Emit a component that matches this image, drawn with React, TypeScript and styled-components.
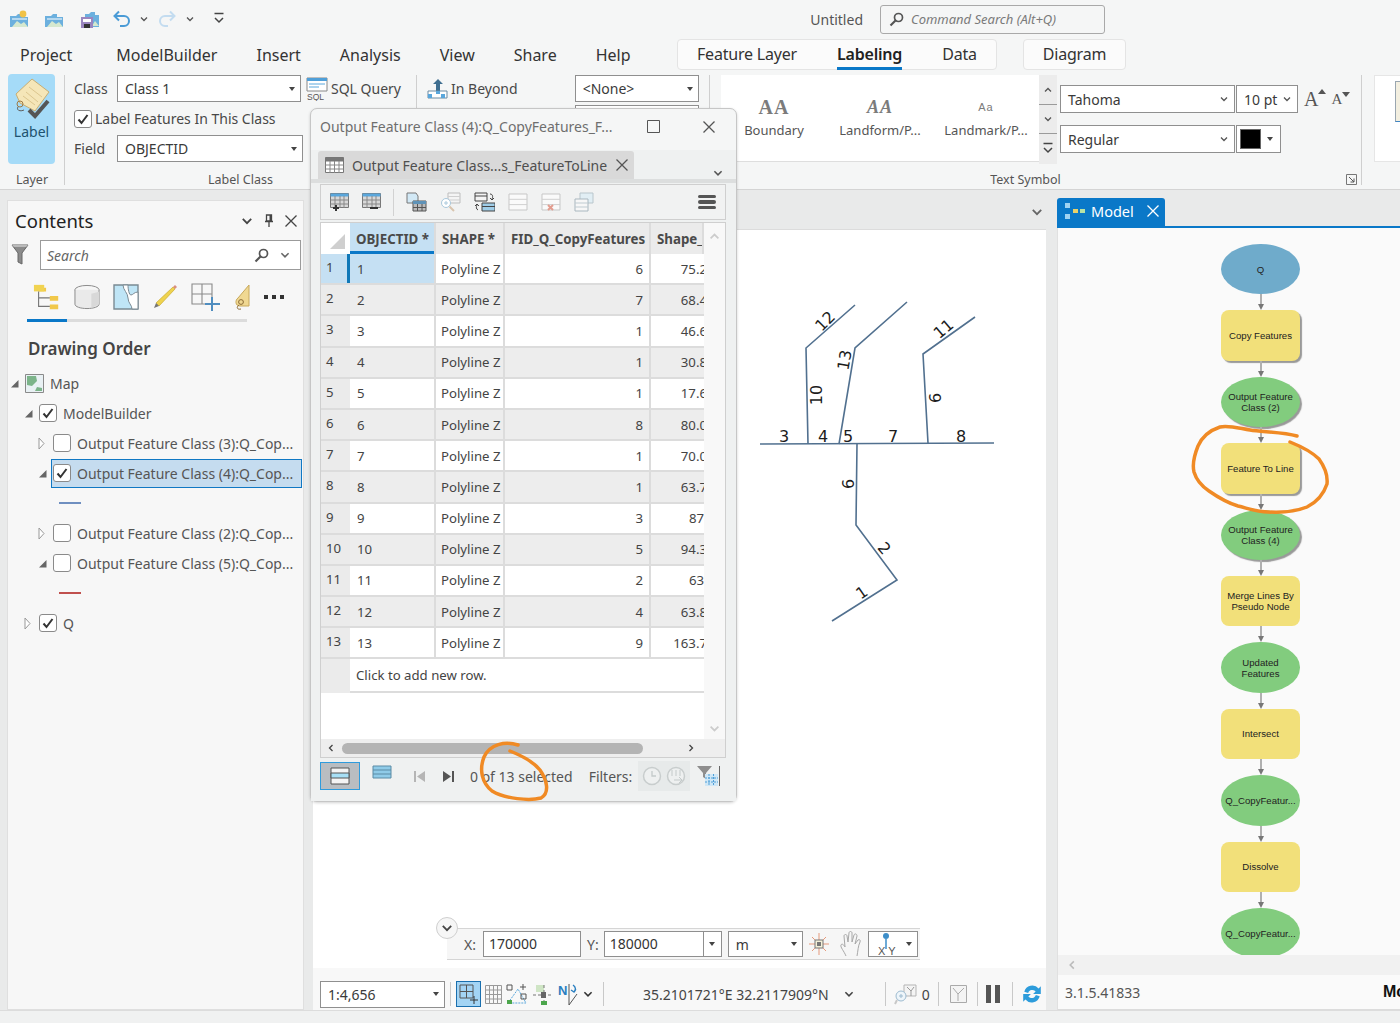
import React from "react";
import styled, { createGlobalStyle, css } from "styled-components";

const GlobalStyle = createGlobalStyle`
  html, body { margin: 0; padding: 0; background: #f5f6f6; }
  body { font-family: "Noto Sans", "Open Sans", sans-serif; color: #3c3c3c; }
  * { box-sizing: border-box; }
  svg { flex: none; }
`;

const Page = styled.div`
  position: relative;
  width: 1400px;
  height: 1023px;
  overflow: hidden;
  display: flex;
  flex-direction: column;
  background: #f5f6f6;
`;

/* title bar */
const TitleBar = styled.div`
  height: 38px;
  flex: none;
  display: flex;
  align-items: center;
  justify-content: space-between;
  padding: 0 295px 0 9px;
`;
const QuickAccess = styled.div`
  display: flex;
  align-items: center;
`;
const QuickSlot = styled.span<{ $w: number }>`
  width: ${(p) => p.$w}px;
  display: flex;
  align-items: center;
`;
const TitleRight = styled.div`
  display: flex;
  align-items: center;
  gap: 17px;
`;
const ProjectName = styled.span`
  font-size: 14px;
  color: #555;
`;
const CommandSearch = styled.div`
  width: 225px;
  height: 29px;
  border: 1px solid #a9a9a9;
  border-radius: 3px;
  display: flex;
  align-items: center;
  gap: 7px;
  padding-left: 8px;
  font-size: 13px;
  font-style: italic;
  color: #7a7a7a;
`;

/* tabs */
const TabRow = styled.div`
  height: 34px;
  flex: none;
  display: flex;
  align-items: stretch;
`;
const MainTabs = styled.div`
  width: 677px;
  display: flex;
  align-items: center;
  gap: 39px;
  padding-left: 20px;
`;
const TabLabel = styled.span<{ $active?: boolean; $wide?: boolean }>`
  font-size: 16px;
  line-height: 31px;
  color: #333;
  white-space: nowrap;
  margin-right: ${(p) => (p.$wide ? 5 : 0)}px;
  ${(p) =>
    p.$active &&
    css`
      font-weight: 600;
      color: #222;
      box-shadow: inset 0 -3px 0 #0a78c8;
    `}
`;
const ContextGroup = styled.div<{ $first?: boolean }>`
  display: flex;
  align-items: center;
  gap: 40px;
  height: 31px;
  margin: 1px 0 0 ${(p) => (p.$first ? 0 : 26)}px;
  padding: 0 19px;
  background: #fbfbfb;
  border: 1px solid #e4e4e4;
  border-radius: 4px;
  letter-spacing: -0.2px;
  & > span {
    letter-spacing: -0.2px;
  }
`;

/* ribbon */
const Ribbon = styled.div`
  height: 118px;
  flex: none;
  display: flex;
  align-items: flex-start;
  border-bottom: 1px solid #d4d4d4;
`;
const RibbonGroup = styled.div<{ $w: number; $last?: boolean }>`
  width: ${(p) => p.$w}px;
  height: 110px;
  margin-top: 3px;
  flex: none;
  display: flex;
  flex-direction: column;
  border-right: ${(p) => (p.$last ? "none" : "1px solid #cfcfcf")};
`;
const GroupBody = styled.div<{ $pl: number }>`
  height: 90px;
  flex: none;
  display: flex;
  padding-left: ${(p) => p.$pl}px;
`;
const GroupCaption = styled.div`
  flex: 1;
  display: flex;
  align-items: center;
  justify-content: center;
  padding-top: 6px;
  font-size: 12.5px;
  color: #555;
`;
const CaptionRow = styled.div`
  flex: 1;
  display: flex;
  align-items: center;
`;
const Launcher = styled.span`
  width: 20px;
  display: flex;
  justify-content: center;
  padding-top: 6px;
`;
const LabelButton = styled.div`
  width: 47px;
  height: 90px;
  margin-top: -1px;
  background: #a5dbf8;
  border-radius: 4px;
  display: flex;
  flex-direction: column;
  align-items: center;
  padding-top: 3px;
  font-size: 14px;
  line-height: 17px;
  color: #21526f;
`;
const FieldStack = styled.div`
  display: grid;
  grid-auto-rows: 27px;
  row-gap: 3px;
`;
const FieldRow = styled.div`
  display: flex;
  align-items: center;
  font-size: 14px;
  color: #484848;
  white-space: nowrap;
`;
const FieldName = styled.span`
  width: 43px;
`;
const IconText = styled.span<{ $ml: number }>`
  display: flex;
  align-items: center;
  gap: 3px;
  margin-left: ${(p) => p.$ml}px;
`;
const Select = styled.div<{ $w: number; $h?: number; $ml?: number }>`
  width: ${(p) => p.$w}px;
  height: ${(p) => p.$h ?? 27}px;
  margin-left: ${(p) => p.$ml ?? 0}px;
  flex: none;
  background: #fff;
  border: 1px solid #8f8f8f;
  display: flex;
  align-items: center;
  justify-content: space-between;
  padding: 0 5px 0 7px;
  font-size: 14px;
  color: #3a3a3a;
`;
const Caret = styled.span`
  width: 0;
  height: 0;
  border-left: 3px solid transparent;
  border-right: 3px solid transparent;
  border-top: 4px solid #444;
`;
const Gallery = styled.div`
  margin-left: 11px;
  width: 318px;
  height: 87px;
  background: #fff;
  border-bottom: 1px solid #dedede;
  display: flex;
`;
const GalleryItem = styled.div`
  flex: 1;
  display: flex;
  flex-direction: column;
  align-items: center;
  font-size: 13px;
  line-height: 20px;
  color: #555;
  padding-top: 18px;
`;
const SymbolSample = styled.span<{ $size: number; $italic?: boolean; $serif?: boolean }>`
  height: 27px;
  display: flex;
  align-items: center;
  font-size: ${(p) => p.$size}px;
  font-weight: ${(p) => (p.$size > 14 ? 700 : 400)};
  font-style: ${(p) => (p.$italic ? "italic" : "normal")};
  font-family: ${(p) => (p.$serif ? '"Liberation Serif", serif' : '"Liberation Sans", sans-serif')};
  letter-spacing: 1px;
  color: #7b7b7b;
`;
const GalleryScroll = styled.div`
  width: 18px;
  height: 87px;
  display: grid;
  grid-template-rows: 29px 28px 30px;
  row-gap: 1px;
  background: #9b9b9b;
`;
const ScrollButton = styled.span`
  background: #ececec;
  display: flex;
  align-items: center;
  justify-content: center;
`;
const FontControls = styled.div`
  margin-left: 3px;
  padding-top: 10px;
  display: grid;
  grid-auto-rows: 28px;
  row-gap: 12px;
`;
const FontRow = styled.div`
  display: flex;
  align-items: center;
`;
const GrowButton = styled.span<{ $ml: number; $size: number }>`
  margin-left: ${(p) => p.$ml}px;
  font-family: "Liberation Serif", serif;
  font-size: ${(p) => p.$size}px;
  color: #555;
  display: flex;
  align-items: flex-start;
  line-height: 1;
`;
const TinyTriangle = styled.span<{ $down?: boolean }>`
  width: 0;
  height: 0;
  border-left: 4px solid transparent;
  border-right: 4px solid transparent;
  ${(p) => (p.$down ? "border-top: 5px solid #555;" : "border-bottom: 5px solid #555;")}
`;
const Swatch = styled.div`
  width: 45px;
  height: 28px;
  margin-left: 1px;
  background: #fff;
  border: 1px solid #8f8f8f;
  display: flex;
  align-items: center;
  gap: 6px;
  padding-left: 3px;
`;
const SwatchColor = styled.span`
  width: 21px;
  height: 20px;
  background: #000;
  border: 1px solid #666;
`;
const LayoutPreview = styled.div`
  margin: 3px 0 0 12px;
  width: 40px;
  height: 87px;
  background: #fff;
  border: 1px solid #e6e6e6;
  padding: 5px 0 0 20px;
`;
const PreviewThumb = styled.div`
  width: 20px;
  height: 41px;
  background: #f3efe0;
  border: 1px solid #9aa6b0;
  border-bottom: 1px solid #3f86c6;
`;

/* main area */
const Main = styled.div`
  height: 820px;
  flex: none;
  display: flex;
  background: #e9eaea;
`;
const BottomStrip = styled.div`
  flex: 1;
  background: #f0f1f1;
  border-top: 1px solid #dcdcdc;
`;

/* contents pane */
const Contents = styled.aside`
  width: 297px;
  height: 810px;
  margin: 10px 0 0 7px;
  background: #f7f7f7;
  border: 1px solid #dfdfdf;
  flex: none;
`;
const PaneHead = styled.div`
  height: 39px;
  display: flex;
  align-items: center;
  padding: 0 5px 0 7px;
`;
const PaneTitle = styled.h2`
  margin: 0;
  flex: 1;
  font-size: 18.5px;
  font-weight: 400;
  color: #222;
`;
const PaneActions = styled.div`
  display: flex;
  align-items: center;
  gap: 10px;
`;
const SearchRow = styled.div`
  display: flex;
  align-items: center;
  gap: 11px;
  padding-left: 3px;
`;
const SearchBox = styled.div`
  width: 261px;
  height: 30px;
  background: #fff;
  border: 1px solid #9b9b9b;
  display: flex;
  align-items: center;
  gap: 10px;
  padding: 0 9px 0 6px;
  font-size: 14px;
  font-style: italic;
  color: #666;
`;
const SearchText = styled.span`
  flex: 1;
`;
const PaneTabs = styled.div`
  display: flex;
  align-items: center;
  gap: 13px;
  margin: 12px 0 0 25px;
  height: 30px;
`;
const PaneTabTrack = styled.div`
  width: 220px;
  height: 3px;
  margin: 7px 0 0 19px;
  background: #dcdcdc;
`;
const PaneTabThumb = styled.div`
  width: 40px;
  height: 3px;
  background: #0a78c8;
`;
const DrawingOrder = styled.h3`
  margin: 15px 0 0 20px;
  font-size: 17px;
  line-height: 24px;
  font-weight: 600;
  color: #444;
`;
const Tree = styled.div`
  margin-top: 7px;
`;
const TreeRow = styled.div<{ $indent: number }>`
  height: 30px;
  display: flex;
  align-items: center;
  padding-left: ${(p) => p.$indent}px;
  font-size: 14px;
  color: #555;
  white-space: nowrap;
`;
const TreeToggle = styled.span`
  width: 15px;
  flex: none;
  display: flex;
`;
const TreeItem = styled.div<{ $selected?: boolean }>`
  height: 30px;
  flex: 1;
  display: flex;
  align-items: center;
  gap: 6px;
  ${(p) =>
    p.$selected &&
    css`
      height: 29px;
      margin: 0 1px 0 -2px;
      padding-left: 1px;
      background: #c5dcef;
      border: 1px solid #1078c4;
    `}
`;
const Check = styled.span`
  width: 18px;
  height: 18px;
  flex: none;
  background: #fff;
  border: 1px solid #8a8a8a;
  border-radius: 3px;
  display: flex;
  align-items: center;
  justify-content: center;
`;
const LegendLine = styled.span<{ $color: string }>`
  width: 22px;
  height: 2px;
  margin-left: 51px;
  background: ${(p) => p.$color};
`;

/* center pane */
const Center = styled.section`
  width: 733px;
  margin-left: 9px;
  flex: none;
  display: flex;
  flex-direction: column;
`;
const CenterHead = styled.div`
  height: 39px;
  display: flex;
  align-items: center;
  justify-content: flex-end;
  padding: 4px 2px 0 0;
`;
const MapArea = styled.div`
  position: relative;
  height: 739px;
  background: #fff;
  border-top: 1px solid #dcdcdc;
`;
const MapSvg = styled.svg`
  display: block;
  width: 733px;
  height: 738px;
`;
const CoordBar = styled.div`
  position: absolute;
  left: 134px;
  top: 698px;
  width: 473px;
  height: 32px;
  background: #f6f6f6;
  border-top: 1px solid #d5d5d5;
  border-bottom: 1px solid #d5d5d5;
  display: flex;
  align-items: center;
  padding-left: 17px;
  font-size: 14px;
  color: #555;
`;
const CoordToggle = styled.span`
  position: absolute;
  left: -11px;
  top: -12px;
  width: 22px;
  height: 22px;
  border-radius: 50%;
  background: #f6f6f6;
  border: 1px solid #cfcfcf;
  display: flex;
  align-items: center;
  justify-content: center;
`;
const CoordInput = styled.span<{ $w: number; $ml: number }>`
  width: ${(p) => p.$w}px;
  height: 26px;
  margin-left: ${(p) => p.$ml}px;
  background: #fff;
  border: 1px solid #8f8f8f;
  padding-left: 5px;
  line-height: 24px;
  color: #333;
`;
const CoordDrop = styled.span`
  width: 19px;
  height: 26px;
  margin-left: -1px;
  background: #fff;
  border: 1px solid #8f8f8f;
  display: flex;
  align-items: center;
  justify-content: center;
`;
const CoordIcon = styled.span<{ $ml: number }>`
  margin-left: ${(p) => p.$ml}px;
  display: flex;
`;
const StatusBar = styled.div`
  height: 42px;
  flex: none;
  background: #f8f8f8;
  display: flex;
  align-items: center;
  padding: 10px 0 0 7px;
  font-size: 14px;
  color: #444;
`;
const StatusSep = styled.span<{ $ml: number }>`
  width: 1px;
  height: 24px;
  margin-left: ${(p) => p.$ml}px;
  background: #c9c9c9;
  flex: none;
`;
const StatusIcons = styled.span<{ $ml: number; $gap: number }>`
  margin-left: ${(p) => p.$ml}px;
  display: flex;
  align-items: center;
  gap: ${(p) => p.$gap}px;
`;
const ActiveToggle = styled.span`
  width: 25px;
  height: 26px;
  background: #a3d4f4;
  border: 1px solid #1a6fae;
  display: flex;
  align-items: center;
  justify-content: center;
`;
const Coordinates = styled.span<{ $ml: number }>`
  margin-left: ${(p) => p.$ml}px;
  white-space: nowrap;
`;

/* model pane */
const ModelPane = styled.section`
  width: 343px;
  margin-left: 11px;
  flex: none;
  display: flex;
  flex-direction: column;
`;
const ModelTabStrip = styled.div`
  height: 38px;
  flex: none;
  display: flex;
  align-items: flex-end;
  border-bottom: 2px solid #0a78c8;
`;
const ModelTab = styled.div`
  width: 108px;
  height: 28px;
  background: #0a78c8;
  border-radius: 3px 3px 0 0;
  display: flex;
  align-items: center;
  gap: 5px;
  padding: 0 0 2px 7px;
  font-size: 14.5px;
  color: #fff;
`;
const ModelTabName = styled.span`
  margin-right: 7px;
`;
const ModelCanvas = styled.div`
  height: 727px;
  flex: none;
  overflow: hidden;
  background: #fafafa;
  border-left: 1px solid #e0e0e0;
  padding: 16px 0 0 163px;
`;
const Flow = styled.div`
  width: 79px;
  display: flex;
  flex-direction: column;
`;
const Connector = styled.div`
  height: 16px;
  display: flex;
  flex-direction: column;
  align-items: center;
  &::before {
    content: "";
    flex: 1;
    width: 2px;
    background: #b0b0b0;
  }
  &::after {
    content: "";
    border-left: 3px solid transparent;
    border-right: 3px solid transparent;
    border-top: 6px solid #777;
  }
`;
const nodeFill = { data: "#6fabcb", tool: "#f2e07a", output: "#82cc7e" };
const Node = styled.div<{ $kind: keyof typeof nodeFill; $shadow?: boolean }>`
  width: 79px;
  height: 50.4px;
  flex: none;
  display: flex;
  align-items: center;
  justify-content: center;
  text-align: center;
  background: ${(p) => nodeFill[p.$kind]};
  border-radius: ${(p) => (p.$kind === "tool" ? "8px" : "50%")};
  box-shadow: ${(p) => (p.$shadow ? "2px 2px 1px #999" : "none")};
  font-family: "Liberation Sans", Arial, sans-serif;
  font-size: 9.6px;
  line-height: 11px;
  color: #222;
  white-space: pre-line;
`;
const ModelScroll = styled.div`
  height: 20px;
  flex: none;
  background: #f1f1f1;
  border-left: 1px solid #e0e0e0;
  display: flex;
  align-items: center;
  padding-left: 8px;
`;
const ModelFooter = styled.div`
  height: 35px;
  flex: none;
  background: #fafafa;
  border-left: 1px solid #e0e0e0;
  border-bottom: 1px solid #dcdcdc;
  display: grid;
  grid-template-columns: 318px 1fr;
  align-items: center;
  padding-left: 7px;
  overflow: hidden;
  font-size: 14px;
  color: #555;
`;
const ModelName = styled.span`
  font-family: "Liberation Sans", Arial, sans-serif;
  font-size: 16px;
  font-weight: 700;
  color: #111;
  white-space: nowrap;
`;

/* floating attribute table */
const TableWindow = styled.div`
  position: absolute;
  left: 310px;
  top: 108px;
  width: 427px;
  height: 694px;
  background: #f5f6f6;
  border: 1px solid #c6c6c6;
  border-radius: 7px;
  box-shadow: 0 1px 3px rgba(0, 0, 0, 0.18);
  display: flex;
  flex-direction: column;
`;
const WindowTitle = styled.div`
  height: 41px;
  flex: none;
  display: flex;
  align-items: center;
  padding: 0 20px 6px 9px;
  font-size: 14px;
  color: #6e6e6e;
  white-space: nowrap;
`;
const WindowTitleText = styled.span`
  width: 336px;
`;
const WindowActions = styled.div`
  display: flex;
  align-items: center;
  gap: 42px;
`;
const WindowTabs = styled.div`
  height: 29px;
  flex: none;
  background: #eff1f1;
  display: flex;
  align-items: flex-end;
  justify-content: space-between;
  padding: 0 12px 0 7px;
`;
const WindowTab = styled.div`
  width: 316px;
  height: 28px;
  background: #d9d9d9;
  border-radius: 3px 3px 0 0;
  display: flex;
  align-items: center;
  gap: 8px;
  padding: 0 6px 0 7px;
  font-size: 14px;
  color: #4f4f4f;
  white-space: nowrap;
`;
const WindowTabText = styled.span`
  flex: 1;
`;
const WindowBody = styled.div`
  flex: 1;
  background: #eff1f1;
  border-top: 4px solid #dcdede;
  padding: 1px 10px 0 9px;
  display: flex;
  flex-direction: column;
`;
const TableToolbar = styled.div`
  height: 36px;
  flex: none;
  border: 1px solid #cfcfcf;
  background: #f1f2f2;
  display: flex;
  align-items: center;
  padding: 0 9px 0 9px;
`;
const ToolbarSep = styled.span`
  width: 1px;
  height: 27px;
  margin: 0 12px 0 12px;
  background: #d2d2d2;
`;
const ToolGroup = styled.span`
  display: flex;
  align-items: center;
  gap: 13px;
`;
const Hamburger = styled.span`
  margin-left: auto;
  width: 18px;
  display: flex;
  flex-direction: column;
  gap: 2px;
  & i {
    height: 3.5px;
    border-radius: 2px;
    background: #555;
  }
`;
const TableFrame = styled.div`
  height: 536px;
  flex: none;
  margin-top: 2px;
  background: #fff;
  border: 1px solid #cfcfcf;
  display: flex;
  flex-direction: column;
`;
const TableScrollArea = styled.div`
  height: 516px;
  flex: none;
  display: flex;
`;
const TableGrid = styled.div`
  width: 383px;
  flex: none;
`;
const gridColumns = "29px 86px 69px 146px 53px";
const HeadRow = styled.div`
  height: 31px;
  display: grid;
  grid-template-columns: ${gridColumns};
`;
const HeadCorner = styled.div`
  background: linear-gradient(135deg, #fff 62%, #cfcfcf 63%);
  border: 5px solid #fff;
`;
const HeadCell = styled.div<{ $active?: boolean }>`
  background: ${(p) => (p.$active ? "#c5e0f3" : "#ebebeb")};
  border-right: 2px solid #dcdcdc;
  box-shadow: ${(p) => (p.$active ? "inset 0 -3px 0 #0a78c8" : "none")};
  display: flex;
  align-items: center;
  padding-left: 6px;
  font-size: 13.3px;
  font-weight: 700;
  color: #4a4a4a;
  white-space: nowrap;
  overflow: hidden;
`;
const DataRow = styled.div<{ $even: boolean }>`
  height: 31.2px;
  display: grid;
  grid-template-columns: ${gridColumns};
  background: ${(p) => (p.$even ? "#ededed" : "#fff")};
  border-bottom: 2px solid #dcdcdc;
  font-size: 13.2px;
  color: #444;
`;
const RowHead = styled.div<{ $active?: boolean }>`
  background: ${(p) => (p.$active ? "#c5e0f3" : "#ebebeb")};
  padding-left: 5px;
  line-height: 27px;
  box-shadow: ${(p) => (p.$active ? "inset -3px 0 0 #0f78b8" : "none")};
`;
const Cell = styled.div<{ $right?: boolean; $active?: boolean; $pl?: number }>`
  background: ${(p) => (p.$active ? "#c5e0f3" : "transparent")};
  border-right: 2px solid #dcdcdc;
  display: flex;
  align-items: center;
  justify-content: ${(p) => (p.$right ? "flex-end" : "flex-start")};
  padding: 0 ${(p) => (p.$right ? 6 : 0)}px 0 ${(p) => p.$pl ?? (p.$right ? 0 : 5)}px;
  overflow: hidden;
  white-space: nowrap;
`;
const ClippedCell = styled.div`
  display: flex;
  align-items: center;
  justify-content: flex-end;
  overflow: hidden;
  white-space: nowrap;
`;
const ClippedValue = styled.span<{ $cut: boolean }>`
  margin-right: ${(p) => (p.$cut ? -3 : 0)}px;
`;
const AddRow = styled.div`
  height: 32px;
  display: grid;
  grid-template-columns: 29px 1fr;
  font-size: 13.2px;
  color: #444;
`;
const AddRowHead = styled.div`
  background: #ebebeb;
`;
const AddRowText = styled.div`
  border-bottom: 2px solid #dcdcdc;
  padding-left: 6px;
  line-height: 32px;
`;
const VScroll = styled.div`
  flex: 1;
  background: #f8f8f8;
  display: flex;
  flex-direction: column;
  align-items: center;
  justify-content: space-between;
  padding: 7px 0 4px;
`;
const HScroll = styled.div`
  flex: 1;
  background: #eeeeee;
  display: flex;
  align-items: center;
  padding-left: 5px;
`;
const HScrollThumb = styled.span`
  width: 301px;
  height: 11px;
  margin: 0 43px 0 6px;
  background: #b4b4b4;
  border-radius: 6px;
`;
const TableFooter = styled.div`
  height: 36px;
  flex: none;
  display: flex;
  align-items: center;
  font-size: 14px;
  color: #555;
  white-space: nowrap;
`;
const ViewToggle = styled.span`
  width: 40px;
  height: 28px;
  background: #b9bdc1;
  border: 1px solid #2f9bdc;
  display: flex;
  align-items: center;
  justify-content: center;
`;
const FooterSlot = styled.span<{ $ml: number; $raised?: boolean }>`
  margin-left: ${(p) => p.$ml}px;
  margin-bottom: ${(p) => (p.$raised ? 8 : 0)}px;
  display: flex;
  align-items: center;
`;
const FilterBox = styled.span`
  width: 52px;
  height: 30px;
  margin-left: 6px;
  background: #e7eaea;
  display: flex;
  align-items: center;
  justify-content: center;
  gap: 4px;
`;

const Annotation = styled.svg`
  position: absolute;
  left: 0;
  top: 0;
  pointer-events: none;
`;

/* small drawings */
const Svg: React.FC<{ w?: number; h?: number; vb?: string; children: React.ReactNode }> = ({
  w = 20,
  h = 20,
  vb,
  children,
}) => (
  <svg width={w} height={h} viewBox={vb ?? `0 0 ${w} ${h}`} fill="none">
    {children}
  </svg>
);

const Chevron = ({ color = "#555", size = 10, dir = "down" }: { color?: string; size?: number; dir?: "down" | "up" | "left" | "right" }) => {
  const d = {
    down: "M2 3.5l3 3 3-3",
    up: "M2 6.5l3-3 3 3",
    left: "M6.5 2l-3 3 3 3",
    right: "M3.5 2l3 3-3 3",
  }[dir];
  return (
    <Svg w={size} h={size} vb="0 0 10 10">
      <path d={d} stroke={color} strokeWidth="1.3" />
    </Svg>
  );
};
const Close = ({ color = "#555", size = 14 }: { color?: string; size?: number }) => (
  <Svg w={size} h={size} vb="0 0 14 14">
    <path d="M1.5 1.5l11 11M12.5 1.5l-11 11" stroke={color} strokeWidth="1.3" />
  </Svg>
);
const Magnifier = ({ size = 15 }: { size?: number }) => (
  <Svg w={size} h={size} vb="0 0 15 15">
    <circle cx="9.500" cy="5.500" r="4" stroke="#555" strokeWidth="1.7" />
    <path d="M6.500 8.500L1.500 13.500" stroke="#555" strokeWidth="2.200" />
  </Svg>
);
const Tick = () => (
  <Svg w={14} h={14} vb="0 0 14 14">
    <path d="M2.500 7.500l3 3.500 6-8" stroke="#333" strokeWidth="2" />
  </Svg>
);
const Folder = ({ sun }: { sun?: boolean }) => (
  <Svg>
    <path d="M1 7h6l2-2h4v3h6v10H1z" fill="#6cb0de" />
    <path d="M3 18l5-6 4 3 3-2 4 5z" fill="#d5e8cf" />
    <path d="M3 9h15v2H3z" fill="#fff" opacity=".5" />
    {sun && <circle cx="14" cy="5" r="3.400" fill="#f0c247" />}
  </Svg>
);
const SaveIcon = () => (
  <Svg>
    <path d="M5 5h4l2-2h4v3h4v12H5z" fill="#6cb0de" />
    <path d="M12 17l3-5 4 5z" fill="#d5e8cf" />
    <path d="M1 8h12v11H1z" fill="#9a86bf" />
    <path d="M3 10h8v3H3z" fill="#fff" />
    <path d="M4 15h6v4H4z" fill="#333" />
  </Svg>
);
const Undo = ({ color }: { color: string }) => (
  <Svg>
    <path d="M3 7h9a5 5 0 0 1 0 10H8" stroke={color} strokeWidth="2" />
    <path d="M7 2.500L2.500 7 7 11.500" stroke={color} strokeWidth="2" />
  </Svg>
);
const Redo = () => (
  <Svg>
    <path d="M17 7H8a5 5 0 0 0 0 10h3" stroke="#c3dcf0" strokeWidth="2" />
    <path d="M13 2.500L17.500 7 13 11.500" stroke="#c3dcf0" strokeWidth="2" />
  </Svg>
);
const Customize = () => (
  <Svg w={12} h={14} vb="0 0 12 14">
    <path d="M1.500 1.500h9" stroke="#444" strokeWidth="1.500" />
    <path d="M2 6l4 4 4-4" stroke="#444" strokeWidth="1.500" />
  </Svg>
);
const LabelTag = () => (
  <Svg w={40} h={46} vb="0 0 40 46">
    <path d="M20 2l17 13-14 19-15-8-4-9z" fill="#f5e6b8" stroke="#c8ae72" />
    <path d="M17 10l13 10M14 15l12 10M11 19l12 9" stroke="#dcc68f" />
    <circle cx="8" cy="27" r="3" stroke="#a07b44" />
    <path d="M6 30c-2 3 2 5 6 3" stroke="#5f5f5f" />
    <path d="M17 33l6 6 13-15" stroke="#555" strokeWidth="4" />
  </Svg>
);
const SqlIcon = () => (
  <Svg w={22} h={24} vb="0 0 22 24">
    <path d="M1 1h20v13H1z" fill="#fff" stroke="#888" />
    <path d="M1 1h20v3H1z" fill="#4f9fd8" />
    <path d="M3 7h16M3 10h10" stroke="#5aa7dc" />
    <text x="1" y="23" fontSize="8.500" fill="#555" fontFamily="Liberation Sans">SQL</text>
  </Svg>
);
const BeyondIcon = () => (
  <Svg w={21} h={22} vb="0 0 21 22">
    <path d="M11 1l5 5h-3v8h-4V6H6z" fill="#3f6e90" />
    <path d="M1 13h19v7H1z" fill="#fff" stroke="#6a8ba3" />
    <path d="M1 16h4v4H1zM9 13h4v3H9zM14 16h4v4h-4z" fill="#5aa7dc" />
  </Svg>
);
const LauncherIcon = () => (
  <Svg w={11} h={11} vb="0 0 11 11">
    <path d="M.5 10.500V.5h10v10z" stroke="#777" />
    <path d="M3 3l5 5M8 4.500V8H4.500" stroke="#555" />
  </Svg>
);
const FunnelIcon = () => (
  <Svg w={18} h={22} vb="0 0 18 22">
    <path d="M1 1h16L11 9v11l-4-2V9z" fill="#8b8b8b" stroke="#666" />
    <path d="M1 1h16l-2 2H3z" fill="#bbb" />
  </Svg>
);
const Pin = () => (
  <Svg w={10} h={14} vb="0 0 10 14">
    <path d="M2.500 1h5v6h-5zM1 7.500h8M5 8v5" stroke="#444" strokeWidth="1.300" />
    <path d="M5.500 1h2v6h-2z" fill="#444" />
  </Svg>
);
const DrawOrderTab = () => (
  <Svg w={28} h={28} vb="0 0 30 28">
    <path d="M6 4h8v4H6zM18 13h9v5h-9zM18 22h9v5h-9z" fill="#f1c84a" />
    <path d="M1 1h11v7H1z" fill="#f1d351" />
    <path d="M6 8v16h12M6 15h12" stroke="#777" strokeWidth="1.200" />
  </Svg>
);
const SourceTab = () => (
  <Svg w={26} h={26} vb="0 0 27 26">
    <ellipse cx="13.500" cy="5.500" rx="12.500" ry="4.500" fill="#f6f6f6" stroke="#888" />
    <path d="M1 5.500v15c0 2.500 5.500 4.500 12.500 4.500S26 23 26 20.500v-15" fill="#eaeaea" stroke="#888" />
    <path d="M18 9.500l8-2v13l-8 4z" fill="#d8d8d8" />
  </Svg>
);
const SelectTab = () => (
  <Svg w={26} h={26} vb="0 0 26 26">
    <path d="M1 1h24v24H1z" fill="#bfe5f6" stroke="#7b8a93" strokeWidth="1.400" />
    <path d="M10 1c0 5 5 8 5 13 0 5 4 7 4 11h6V8c-4 0-5 3-7 3-2 0-3-6-3-10z" fill="#fff" stroke="#7b8a93" />
  </Svg>
);
const PencilTab = () => (
  <Svg w={26} h={26} vb="0 0 26 26">
    <path d="M4 19L21 3l2 2L7 22z" fill="#efd34e" stroke="#c9a92e" strokeWidth=".7" />
    <path d="M21 3l2-2 2 2-2 2z" fill="#d99080" />
    <path d="M4 19l3 3-5 2z" fill="#777" />
  </Svg>
);
const GridPlusTab = () => (
  <Svg w={30} h={29} vb="0 0 30 29">
    <path d="M1 1h20v20H1zM11 1v20M1 11h20" stroke="#8a8a8a" strokeWidth="1.100" />
    <path d="M21 14v14M14 21h15" stroke="#4f8dbf" strokeWidth="2" />
  </Svg>
);
const TagTab = () => (
  <Svg w={16} h={27} vb="0 0 16 27">
    <path d="M15 1v21H6C1 22 1 16 4 14z" fill="#f0d892" stroke="#c8a95c" />
    <circle cx="7" cy="18" r="2.400" stroke="#8a6a35" />
    <path d="M5 21c-3 2-2 5 2 4" stroke="#8a6a35" />
  </Svg>
);
const Dots = () => (
  <Svg w={22} h={6} vb="0 0 22 6">
    <path d="M1 1h4v4H1zM9 1h4v4H9zM17 1h4v4h-4z" fill="#333" />
  </Svg>
);
const MapGlyph = () => (
  <Svg w={19} h={19}>
    <path d="M.5.5h18v18H.5z" fill="#e9f1f4" stroke="#8a8a8a" />
    <path d="M2 2h9l1 5-5 5-5-1z" fill="#7cb48a" />
    <path d="M10 17l2-4 5 1v3z" fill="#7cb48a" />
  </Svg>
);
const Expanded = () => (
  <Svg w={9} h={9} vb="0 0 9 9">
    <path d="M8.500 1v7.500H1z" fill="#666" />
  </Svg>
);
const Collapsed = () => (
  <Svg w={7} h={13} vb="0 0 7 13">
    <path d="M1 1l5 5.500L1 12z" fill="#fff" stroke="#999" />
  </Svg>
);
const TableTabIcon = () => (
  <Svg w={19} h={16} vb="0 0 19 16">
    <path d="M.5.5h18v15H.5z" fill="#fff" stroke="#777" />
    <path d="M.5.5h18v4H.5z" fill="#777" />
    <path d="M.5 8h18M.5 12h18M5 4v12M9.500 4v12M14 4v12" stroke="#888" />
  </Svg>
);
const SheetIcon = ({ sign }: { sign: "plus" | "minus" }) => (
  <Svg w={19} h={20}>
    <path d="M.5 1.500h18v14H.5z" fill="#d8d8d8" stroke="#777" />
    <path d="M.5 1.500h18v3H.5z" fill="#5aa7dc" />
    <path d="M.5 8h18M.5 12h18M5 4v12M10 4v12M14 4v12" stroke="#888" />
    <path d={sign === "plus" ? "M5 13h2v2h2v2H7v2H5v-2H3v-2h2z" : "M8 15h8v2H8z"} fill="#333" />
  </Svg>
);
const RelateIcon = () => (
  <Svg w={21} h={20} vb="0 0 21 20">
    <path d="M1 1h9l2 3v7H1z" fill="#d2e9f6" stroke="#777" />
    <path d="M7 9h13v10H7z" fill="#bbb" stroke="#555" />
    <path d="M7 9h13v3H7z" fill="#5f93b8" />
    <path d="M7 15.500h13M11.500 12v7M16 12v7" stroke="#555" />
  </Svg>
);
const ZoomSelIcon = () => (
  <Svg w={21} h={20} vb="0 0 21 20">
    <path d="M8 1h12v10H8z" fill="#f4f4f4" stroke="#bdbdbd" />
    <path d="M8 4.500h12M8 8h12" stroke="#cfcfcf" />
    <circle cx="6" cy="11" r="4.500" fill="#fff" stroke="#a9c8dc" />
    <path d="M4 11h4M6 9v4" stroke="#a9c8dc" />
    <path d="M9.500 14.500L14 19" stroke="#d8c4ae" strokeWidth="2" />
  </Svg>
);
const SwitchIcon = () => (
  <Svg w={21} h={20} vb="0 0 21 20">
    <path d="M1 1h12v8H1z" fill="#f4f4f4" stroke="#444" />
    <path d="M1 4h12" stroke="#444" />
    <path d="M8 11h13v8H8z" fill="#9fcde8" stroke="#444" />
    <path d="M8 14.500h13" stroke="#444" />
    <path d="M16 2c3 0 3 3 2 5M16 6l2 2 2-2M4 18c-2-1-2-3-1-5M1 14l2-2 2 2" stroke="#444" />
  </Svg>
);
const RowsIcon = ({ mark, faded }: { mark?: boolean; faded?: boolean }) => (
  <Svg w={20} h={20}>
    <path d="M1 2h18v16H1z" fill="#fafafa" stroke={faded ? "#c7c7c7" : "#999"} />
    <path d="M1 7.300h18M1 12.600h18" stroke={faded ? "#d0d0d0" : "#aaa"} />
    {mark && <path d="M7 13l5 5M12 13l-5 5" stroke="#e39d8f" strokeWidth="2" />}
  </Svg>
);
const CopyRowsIcon = () => (
  <Svg w={20} h={20}>
    <path d="M6 1h13v10H6z" fill="#e1eef4" stroke="#b9c6cc" />
    <path d="M1 7h13v12H1z" fill="#f7f7f7" stroke="#a9b7bf" />
    <path d="M1 11h13M1 15h13" stroke="#bfcbd1" />
  </Svg>
);
const ViewAll = () => (
  <Svg w={20} h={18} vb="0 0 20 18">
    <path d="M1 1h18v16H1z" fill="#f4f4f4" stroke="#555" />
    <path d="M1 6h18v5H1z" fill="#a7dff5" stroke="#555" />
  </Svg>
);
const ViewSelected = () => (
  <Svg w={20} h={14} vb="0 0 20 14">
    <path d="M1 1h18v12H1z" fill="#8fcbe8" stroke="#5a8ba5" />
    <path d="M1 5h18M1 9h18" stroke="#5a8ba5" />
  </Svg>
);
const SkipIcon = ({ end, color }: { end?: boolean; color: string }) => (
  <Svg w={13} h={13}>
    {end ? <path d="M1 1l8 5.500L1 12zM10 1h2v11h-2z" fill={color} /> : <path d="M12 1L4 6.500l8 5.500zM1 1h2v11H1z" fill={color} />}
  </Svg>
);
const ClockIcon = ({ arrow }: { arrow?: boolean }) => (
  <Svg w={20} h={20}>
    <circle cx="10" cy="10" r="8.500" fill="#eef0f0" stroke="#c8cdcd" strokeWidth="1.500" />
    {arrow ? <path d="M6 4v6M10 4v6M14 4v6M8 14h7M13 11l3 3-3 3" stroke="#c4caca" /> : <path d="M10 5v5h4" stroke="#c4caca" strokeWidth="1.300" />}
  </Svg>
);
const FilterTableIcon = () => (
  <Svg w={24} h={22} vb="0 0 24 22">
    <path d="M1 1h15L10 8v6L7 12V8z" fill="#8e8e8e" />
    <path d="M9 9h13v12H9z" fill="#cfe7f6" />
    <path d="M9 13h13M9 17h13M13 9v12M17.500 9v12" stroke="#4f9fd8" strokeDasharray="2 1" />
    <path d="M23.500 1v20" stroke="#666" />
  </Svg>
);
const SnapOrigin = () => (
  <Svg w={20} h={22}>
    <path d="M10 0v7M10 15v7M0 11h6M14 11h6M3 4l4 4M17 4l-4 4M3 18l4-4M17 18l-4-4" stroke="#e59a7c" />
    <path d="M6 7h8v8H6z" fill="#f4f0d8" stroke="#777" />
    <path d="M8 9h4v4H8z" fill="#777" />
  </Svg>
);
const Hand = () => (
  <Svg w={23} h={26} vb="0 0 23 26">
    <path d="M7 25C5 20 1 16 2 14s3 0 4 2L5 5c0-2 3-2 3 0l1 6 1-9c0-2 3-2 3 0l0 9 2-7c1-2 3-1 3 1l-2 8 3-4c1-1 3 0 2 2-2 4-2 9-3 14" stroke="#a8a8a8" />
  </Svg>
);
const XyIcon = () => (
  <Svg w={20} h={24}>
    <circle cx="10" cy="4" r="3" fill="#3d8ec9" />
    <path d="M10 7v10" stroke="#3d8ec9" strokeWidth="1.500" />
    <text x="2" y="23" fontSize="11" fill="#555" fontFamily="Liberation Sans">X Y</text>
  </Svg>
);
const GridPlusStatus = () => (
  <Svg w={20} h={21} vb="0 0 20 21">
    <path d="M1 1h13v13H1zM7.500 1v13M1 7.500h13" stroke="#555" />
    <path d="M15 12v8M11 16h8" stroke="#333" />
  </Svg>
);
const GridStatus = () => (
  <Svg w={17} h={19} vb="0 0 17 19">
    <path d="M.5.5h16v18H.5zM4.500.5v18M8.500.5v18M12.500.5v18M.5 5h16M.5 9.500h16M.5 14h16" stroke="#9a9a9a" />
  </Svg>
);
const SnapStatus = () => (
  <Svg w={22} h={21} vb="0 0 22 21">
    <path d="M2 19L12 5l8 14z" stroke="#5aa7dc" strokeDasharray="2 1" />
    <path d="M1 16h5v4H1z" fill="#4ca64c" />
    <path d="M1 1h5v5H1zM15 10h5v5h-5z" stroke="#555" />
    <path d="M14 3h6M17 0v6" stroke="#555" />
  </Svg>
);
const GuideStatus = () => (
  <Svg w={22} h={21} vb="0 0 22 21">
    <path d="M4 1h8v7H4z" fill="#cfe5c5" />
    <path d="M12 1v20" stroke="#777" strokeDasharray="3 2" />
    <path d="M1 11h20" stroke="#777" strokeDasharray="3 2" />
    <path d="M9 8h5v6H9z" fill="#666" />
    <path d="M9 17h6v4H9z" fill="#4ca64c" />
  </Svg>
);
const NorthStatus = () => (
  <Svg w={20} h={23} vb="0 0 20 23">
    <text x="0" y="12" fontSize="13" fontWeight="700" fill="#2a7fc0" fontFamily="Liberation Sans">N</text>
    <path d="M11 1v21M11 22l8-11" stroke="#555" />
    <path d="M15 2c3 2 3 5 1 7M13 7l3 2 2-3" stroke="#2a7fc0" strokeWidth="1.400" />
  </Svg>
);
const SelectedStatus = () => (
  <Svg w={24} h={22} vb="0 0 24 22">
    <path d="M10 2h12v11H10z" fill="#f4f4f4" stroke="#b5b5b5" />
    <path d="M13 4l4 4 3-4M17 8v5" stroke="#9a9a9a" />
    <circle cx="7" cy="13" r="5" fill="#eef5fa" stroke="#9dbbd0" />
    <path d="M5 13h4M7 11v4" stroke="#9dbbd0" />
    <path d="M3 17l-2 4" stroke="#c8c8c8" strokeWidth="2" />
  </Svg>
);
const ClearStatus = () => (
  <Svg w={17} h={18} vb="0 0 17 18">
    <path d="M.5.5h16v17H.5z" fill="#f4f4f4" stroke="#aaa" />
    <path d="M3 3l5 6 6-6M8 9v7" stroke="#aaa" />
  </Svg>
);
const PauseStatus = () => (
  <Svg w={14} h={18} vb="0 0 14 18">
    <path d="M0 0h5v18H0zM9 0h5v18H9z" fill="#555" />
  </Svg>
);
const RefreshStatus = () => (
  <Svg w={22} h={24} vb="0 0 20 20">
    <path d="M3 8a7.500 7.500 0 0 1 13-3l2-2v7h-7l2.300-2.300A4 4 0 0 0 6.500 9z" fill="#2d9cdb" />
    <path d="M17 12a7.500 7.500 0 0 1-13 3l-2 2v-7h7l-2.300 2.300A4 4 0 0 0 13.500 11z" fill="#2d9cdb" />
  </Svg>
);
const ModelGlyph = () => (
  <Svg w={22} h={18} vb="0 0 22 18">
    <path d="M1 1h5v5H1zM1 12h5v5H1z" fill="#9fd3f2" />
    <path d="M9 7h5v4H9z" fill="#e9d26a" />
    <path d="M16 7h5v4h-5z" fill="#b7e3a6" />
  </Svg>
);

const treeLabel = "Output Feature Class";

const rows = [
  [1, 6, "75.2"], [2, 7, "68.4"], [3, 1, "46.6"], [4, 1, "30.8"], [5, 1, "17.6"],
  [6, 8, "80.0"], [7, 1, "70.0"], [8, 1, "63.7"], [9, 3, "87"], [10, 5, "94.3"],
  [11, 2, "63"], [12, 4, "63.8"], [13, 9, "163.7"],
] as const;

const nodes: { text: string; kind: keyof typeof nodeFill; shadow?: boolean }[] = [
  { text: "Q", kind: "data" },
  { text: "Copy Features", kind: "tool", shadow: true },
  { text: "Output Feature\nClass (2)", kind: "output", shadow: true },
  { text: "Feature To Line", kind: "tool", shadow: true },
  { text: "Output Feature\nClass (4)", kind: "output", shadow: true },
  { text: "Merge Lines By\nPseudo Node", kind: "tool" },
  { text: "Updated\nFeatures", kind: "output" },
  { text: "Intersect", kind: "tool" },
  { text: "Q_CopyFeatur...", kind: "output" },
  { text: "Dissolve", kind: "tool" },
  { text: "Q_CopyFeatur...", kind: "output" },
];

const mapLabels: [string, number, number, number][] = [
  ["3", 784, 442, 0], ["4", 823, 442, 0], ["5", 848, 442, 0], ["7", 893, 442, 0], ["8", 961, 442, 0],
  ["10", 822, 395, -90], ["13", 850, 361, -80], ["6", 941, 398, -90], ["12", 829, 325, -45],
  ["11", 947, 333, -40], ["6", 854, 484, -90], ["2", 880, 552, 50], ["1", 865, 597, -35],
];

const Dropdown = ({ w, h, ml, children }: { w: number; h?: number; ml?: number; children?: React.ReactNode }) => (
  <Select $w={w} $h={h} $ml={ml}>
    {children}
    <Caret />
  </Select>
);

const OutputRow = ({ n, open, on, selected }: { n: number; open?: boolean; on?: boolean; selected?: boolean }) => (
  <TreeRow $indent={30}>
    <TreeToggle>{open ? <Expanded /> : <Collapsed />}</TreeToggle>
    <TreeItem $selected={selected}>
      <Check>{on && <Tick />}</Check>
      {treeLabel} ({n}):Q_Cop...
    </TreeItem>
  </TreeRow>
);

export default function App() {
  return (
    <Page>
      <GlobalStyle />
      <TitleBar>
        <QuickAccess>
          <QuickSlot $w={35}><Folder sun /></QuickSlot>
          <QuickSlot $w={36}><Folder /></QuickSlot>
          <QuickSlot $w={32}><SaveIcon /></QuickSlot>
          <QuickSlot $w={27}><Undo color="#4a9bd6" /></QuickSlot>
          <QuickSlot $w={18}><Chevron /></QuickSlot>
          <QuickSlot $w={28}><Redo /></QuickSlot>
          <QuickSlot $w={28}><Chevron /></QuickSlot>
          <QuickSlot $w={12}><Customize /></QuickSlot>
        </QuickAccess>
        <TitleRight>
          <ProjectName>Untitled</ProjectName>
          <CommandSearch>
            <Magnifier />
            Command Search (Alt+Q)
          </CommandSearch>
        </TitleRight>
      </TitleBar>

      <TabRow>
        <MainTabs>
          <TabLabel $wide>Project</TabLabel>
          <TabLabel>ModelBuilder</TabLabel>
          <TabLabel>Insert</TabLabel>
          <TabLabel>Analysis</TabLabel>
          <TabLabel>View</TabLabel>
          <TabLabel>Share</TabLabel>
          <TabLabel>Help</TabLabel>
        </MainTabs>
        <ContextGroup $first>
          <TabLabel>Feature Layer</TabLabel>
          <TabLabel $active>Labeling</TabLabel>
          <TabLabel>Data</TabLabel>
        </ContextGroup>
        <ContextGroup>
          <TabLabel>Diagram</TabLabel>
        </ContextGroup>
      </TabRow>

      <Ribbon>
        <RibbonGroup $w={65}>
          <GroupBody $pl={8}>
            <LabelButton>
              <LabelTag />
              Label
            </LabelButton>
          </GroupBody>
          <GroupCaption>Layer</GroupCaption>
        </RibbonGroup>
        <RibbonGroup $w={352}>
          <GroupBody $pl={9}>
            <FieldStack>
              <FieldRow>
                <FieldName>Class</FieldName>
                <Dropdown w={184}>Class 1</Dropdown>
                <IconText $ml={5}><SqlIcon />SQL Query</IconText>
              </FieldRow>
              <FieldRow>
                <Check><Tick /></Check>
                <IconText $ml={3}>Label Features In This Class</IconText>
              </FieldRow>
              <FieldRow>
                <FieldName>Field</FieldName>
                <Dropdown w={186}>OBJECTID</Dropdown>
              </FieldRow>
            </FieldStack>
          </GroupBody>
          <GroupCaption>Label Class</GroupCaption>
        </RibbonGroup>
        <RibbonGroup $w={293}>
          <GroupBody $pl={10}>
            <FieldStack>
              <FieldRow>
                <IconText $ml={0}><BeyondIcon />In Beyond</IconText>
                <Dropdown w={124} ml={57}>&lt;None&gt;</Dropdown>
              </FieldRow>
              <FieldRow>
                <Dropdown w={124} ml={148} />
              </FieldRow>
            </FieldStack>
          </GroupBody>
        </RibbonGroup>
        <RibbonGroup $w={652}>
          <GroupBody $pl={0}>
            <Gallery>
              <GalleryItem><SymbolSample $size={20} $serif>AA</SymbolSample>Boundary</GalleryItem>
              <GalleryItem><SymbolSample $size={18} $italic $serif>AA</SymbolSample>Landform/P...</GalleryItem>
              <GalleryItem><SymbolSample $size={11}>Aa</SymbolSample>Landmark/P...</GalleryItem>
            </Gallery>
            <GalleryScroll>
              <ScrollButton><Chevron dir="up" /></ScrollButton>
              <ScrollButton><Chevron /></ScrollButton>
              <ScrollButton><Customize /></ScrollButton>
            </GalleryScroll>
            <FontControls>
              <FontRow>
                <Select $w={175} $h={28}>Tahoma<Chevron /></Select>
                <Select $w={62} $h={28} $ml={1}>10 pt<Chevron /></Select>
                <GrowButton $ml={6} $size={20}>A<TinyTriangle /></GrowButton>
                <GrowButton $ml={5} $size={15}>A<TinyTriangle $down /></GrowButton>
              </FontRow>
              <FontRow>
                <Select $w={175} $h={28}>Regular<Chevron /></Select>
                <Swatch><SwatchColor /><Caret /></Swatch>
              </FontRow>
            </FontControls>
          </GroupBody>
          <CaptionRow>
            <GroupCaption>Text Symbol</GroupCaption>
            <Launcher><LauncherIcon /></Launcher>
          </CaptionRow>
        </RibbonGroup>
        <LayoutPreview><PreviewThumb /></LayoutPreview>
      </Ribbon>

      <Main>
        <Contents>
          <PaneHead>
            <PaneTitle>Contents</PaneTitle>
            <PaneActions>
              <Chevron color="#444" size={14} />
              <Pin />
              <Close color="#444" />
            </PaneActions>
          </PaneHead>
          <SearchRow>
            <FunnelIcon />
            <SearchBox>
              <SearchText>Search</SearchText>
              <Magnifier />
              <Chevron color="#666" size={12} />
            </SearchBox>
          </SearchRow>
          <PaneTabs>
            <DrawOrderTab />
            <SourceTab />
            <SelectTab />
            <PencilTab />
            <GridPlusTab />
            <TagTab />
            <Dots />
          </PaneTabs>
          <PaneTabTrack><PaneTabThumb /></PaneTabTrack>
          <DrawingOrder>Drawing Order</DrawingOrder>
          <Tree>
            <TreeRow $indent={2}>
              <TreeToggle><Expanded /></TreeToggle>
              <TreeItem><MapGlyph />Map</TreeItem>
            </TreeRow>
            <TreeRow $indent={16}>
              <TreeToggle><Expanded /></TreeToggle>
              <TreeItem><Check><Tick /></Check>ModelBuilder</TreeItem>
            </TreeRow>
            <OutputRow n={3} />
            <OutputRow n={4} open on selected />
            <TreeRow $indent={0}><LegendLine $color="#6f8fc0" /></TreeRow>
            <OutputRow n={2} />
            <OutputRow n={5} open />
            <TreeRow $indent={0}><LegendLine $color="#c0504d" /></TreeRow>
            <TreeRow $indent={16}>
              <TreeToggle><Collapsed /></TreeToggle>
              <TreeItem><Check><Tick /></Check>Q</TreeItem>
            </TreeRow>
          </Tree>
        </Contents>

        <Center>
          <CenterHead><Chevron color="#666" size={14} /></CenterHead>
          <MapArea>
            <MapSvg viewBox="313 230 733 738">
              <g stroke="#51708f" strokeWidth="1.6" fill="none">
                <path d="M760 444L994 443" />
                <path d="M808 444L806 348L855 305" />
                <path d="M839 444L855 348L907 302" />
                <path d="M928 443L923 354L975 317" />
                <path d="M857 444L856 525L897 580L832 621" />
              </g>
              {mapLabels.map(([t, x, y, r], i) => (
                <text
                  key={i}
                  x={x}
                  y={y}
                  textAnchor="middle"
                  fontSize="16"
                  fill="#1c1c1c"
                  fontFamily="DejaVu Sans, sans-serif"
                  transform={r ? `rotate(${r} ${x} ${y})` : undefined}
                >
                  {t}
                </text>
              ))}
            </MapSvg>
            <CoordBar>
              <CoordToggle><Chevron color="#444" size={14} /></CoordToggle>
              X:
              <CoordInput $w={98} $ml={7}>170000</CoordInput>
              <CoordIcon $ml={6}>Y:</CoordIcon>
              <CoordInput $w={100} $ml={5}>180000</CoordInput>
              <CoordDrop><Caret /></CoordDrop>
              <Select $w={75} $h={26} $ml={6}>m<Caret /></Select>
              <CoordIcon $ml={6}><SnapOrigin /></CoordIcon>
              <CoordIcon $ml={10}><Hand /></CoordIcon>
              <Select $w={50} $h={26} $ml={6}><XyIcon /><Caret /></Select>
            </CoordBar>
          </MapArea>
          <StatusBar>
            <Dropdown w={125}>1:4,656</Dropdown>
            <StatusSep $ml={5} />
            <StatusIcons $ml={5} $gap={4}>
              <ActiveToggle><GridPlusStatus /></ActiveToggle>
              <GridStatus />
              <SnapStatus />
              <GuideStatus />
              <NorthStatus />
              <Chevron color="#333" size={12} />
            </StatusIcons>
            <StatusSep $ml={9} />
            <Coordinates $ml={39}>35.2101721°E 32.2117909°N</Coordinates>
            <StatusIcons $ml={14} $gap={0}><Chevron color="#444" size={12} /></StatusIcons>
            <StatusSep $ml={30} />
            <StatusIcons $ml={8} $gap={4}><SelectedStatus />0</StatusIcons>
            <StatusSep $ml={8} />
            <StatusIcons $ml={11} $gap={0}><ClearStatus /></StatusIcons>
            <StatusSep $ml={10} />
            <StatusIcons $ml={8} $gap={0}><PauseStatus /></StatusIcons>
            <StatusSep $ml={12} />
            <StatusIcons $ml={8} $gap={0}><RefreshStatus /></StatusIcons>
          </StatusBar>
        </Center>

        <ModelPane>
          <ModelTabStrip>
            <ModelTab>
              <ModelGlyph />
              <ModelTabName>Model</ModelTabName>
              <Close color="#fff" />
            </ModelTab>
          </ModelTabStrip>
          <ModelCanvas>
            <Flow>
              {nodes.map((n, i) => (
                <React.Fragment key={i}>
                  {i > 0 && <Connector />}
                  <Node $kind={n.kind} $shadow={n.shadow}>{n.text}</Node>
                </React.Fragment>
              ))}
            </Flow>
          </ModelCanvas>
          <ModelScroll><Chevron color="#bbb" size={12} dir="left" /></ModelScroll>
          <ModelFooter>
            <span>3.1.5.41833</span>
            <ModelName>Model</ModelName>
          </ModelFooter>
        </ModelPane>
      </Main>
      <BottomStrip />

      <TableWindow>
        <WindowTitle>
          <WindowTitleText>Output Feature Class (4):Q_CopyFeatures_F...</WindowTitleText>
          <WindowActions>
            <Svg w={13} h={13}><path d="M.5.5h12v12H.5z" stroke="#555" /></Svg>
            <Close />
          </WindowActions>
        </WindowTitle>
        <WindowTabs>
          <WindowTab>
            <TableTabIcon />
            <WindowTabText>Output Feature Class...s_FeatureToLine</WindowTabText>
            <Close size={14} />
          </WindowTab>
          <Chevron color="#555" size={12} />
        </WindowTabs>
        <WindowBody>
          <TableToolbar>
            <ToolGroup>
              <SheetIcon sign="plus" />
              <SheetIcon sign="minus" />
            </ToolGroup>
            <ToolbarSep />
            <ToolGroup>
              <RelateIcon />
              <ZoomSelIcon />
              <SwitchIcon />
              <RowsIcon faded />
              <RowsIcon faded mark />
              <CopyRowsIcon />
            </ToolGroup>
            <Hamburger><i /><i /><i /></Hamburger>
          </TableToolbar>
          <TableFrame>
            <TableScrollArea>
              <TableGrid>
                <HeadRow>
                  <HeadCorner />
                  <HeadCell $active>OBJECTID *</HeadCell>
                  <HeadCell>SHAPE *</HeadCell>
                  <HeadCell>FID_Q_CopyFeatures</HeadCell>
                  <HeadCell>Shape_</HeadCell>
                </HeadRow>
                {rows.map(([id, fid, len], i) => (
                  <DataRow key={id} $even={i % 2 === 1}>
                    <RowHead $active={i === 0}>{id}</RowHead>
                    <Cell $active={i === 0} $pl={7}>{id}</Cell>
                    <Cell>Polyline Z</Cell>
                    <Cell $right>{fid}</Cell>
                    <ClippedCell>
                      <ClippedValue $cut={len.includes(".")}>{len}</ClippedValue>
                    </ClippedCell>
                  </DataRow>
                ))}
                <AddRow>
                  <AddRowHead />
                  <AddRowText>Click to add new row.</AddRowText>
                </AddRow>
              </TableGrid>
              <VScroll>
                <Chevron color="#ccc" size={13} dir="up" />
                <Chevron color="#ccc" size={13} />
              </VScroll>
            </TableScrollArea>
            <HScroll>
              <Chevron color="#444" size={10} dir="left" />
              <HScrollThumb />
              <Chevron color="#444" size={10} dir="right" />
            </HScroll>
          </TableFrame>
          <TableFooter>
            <ViewToggle><ViewAll /></ViewToggle>
            <FooterSlot $ml={12} $raised><ViewSelected /></FooterSlot>
            <FooterSlot $ml={21}><SkipIcon color="#b5b5b5" /></FooterSlot>
            <FooterSlot $ml={16}><SkipIcon end color="#555" /></FooterSlot>
            <FooterSlot $ml={15}>0 of 13 selected</FooterSlot>
            <FooterSlot $ml={16}>Filters:</FooterSlot>
            <FilterBox>
              <ClockIcon />
              <ClockIcon arrow />
            </FilterBox>
            <FooterSlot $ml={6}><FilterTableIcon /></FooterSlot>
          </TableFooter>
        </WindowBody>
      </TableWindow>

      <Annotation width="1400" height="1023" viewBox="0 0 1400 1023" fill="none">
        <g stroke="#f08a24" strokeWidth="3.5" strokeLinecap="round" strokeLinejoin="round">
          <path d="M518 745C505 741 490 744 484 757C479 770 482 783 492 791C505 799 530 801 541 798C550 793 547 780 540 770C533 761 520 755 510 751" />
          <path d="M1297 436C1282 432 1262 432 1250 430C1238 428 1228 425 1220 427C1208 431 1202 437 1198 446C1194 456 1192 464 1194 472C1197 482 1203 487 1209 491C1219 498 1228 503 1238 506C1250 509 1258 512 1268 512C1284 513 1297 511 1307 507C1317 502 1324 493 1327 484C1328 475 1324 466 1319 459C1311 451 1300 446 1290 442" />
        </g>
      </Annotation>
    </Page>
  );
}
